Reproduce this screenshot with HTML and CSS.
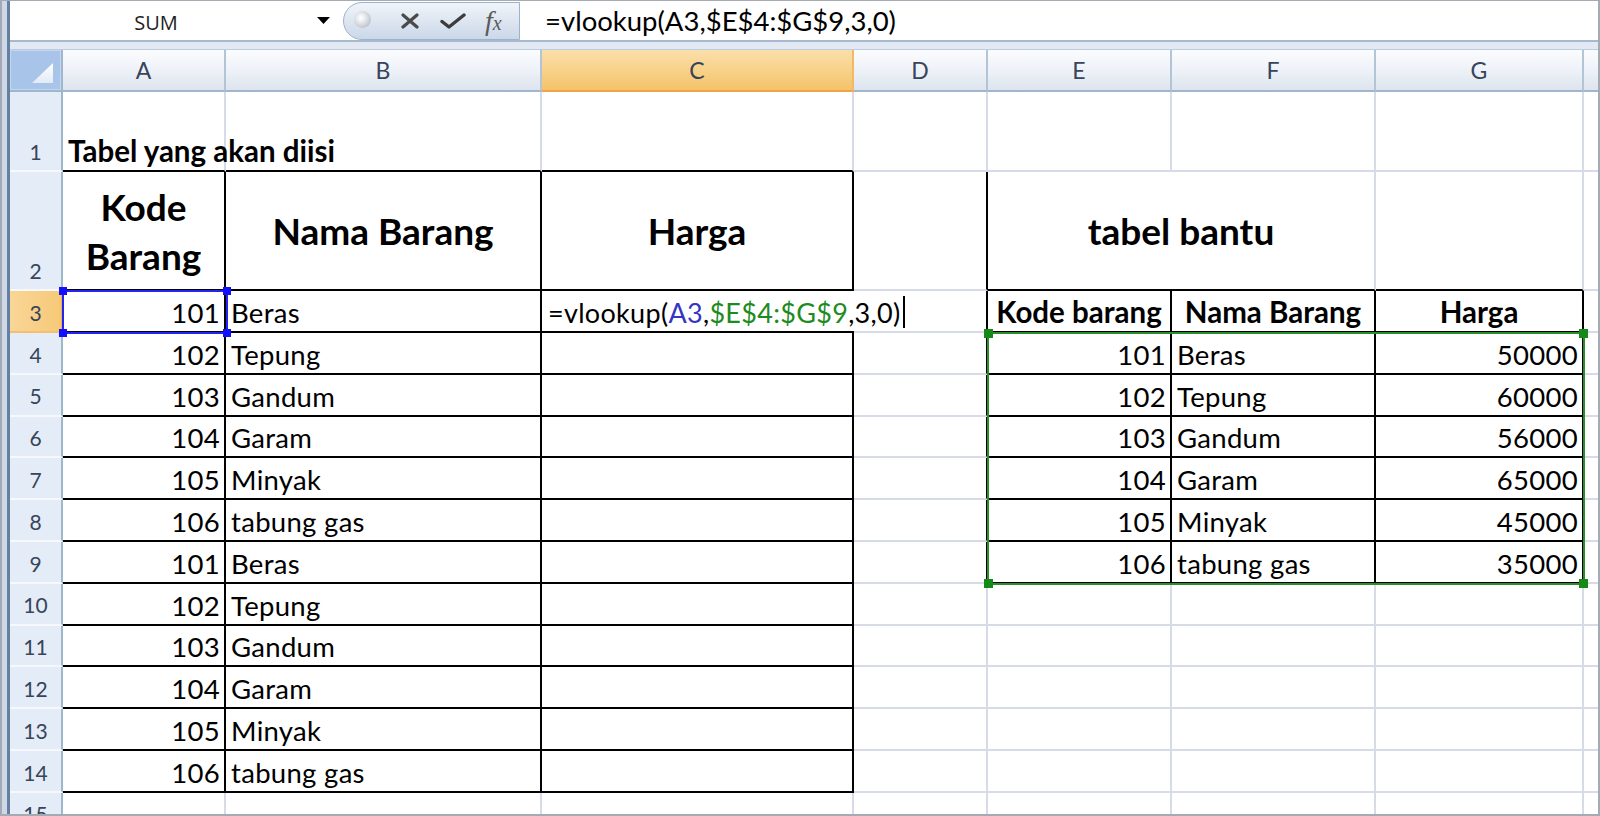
FILE: index.html
```html
<!DOCTYPE html>
<html>
<head>
<meta charset="utf-8">
<title>vlookup</title>
<link rel="stylesheet" href="styles.css">
</head>
<body>
<div class="window">
  <div class="leftbar"></div>
  <div class="main">
    <div class="fbar">
      <div class="namebox">
        <span class="name">SUM</span>
        <svg class="arrow" viewBox="0 0 13 7"><path d="M0 0H13L6.5 7Z" fill="#000"/></svg>
      </div>
      <div class="pill">
        <span class="knob"></span>
        <svg class="ix" viewBox="0 0 20 16"><path d="M3 2L17 14M17 2L3 14" stroke="#4a4a4a" stroke-width="3.2" stroke-linecap="round" fill="none"/></svg>
        <svg class="iok" viewBox="0 0 26 16"><path d="M2 8.5L9 14L24 2" stroke="#3c3c3c" stroke-width="3.4" stroke-linecap="round" stroke-linejoin="round" fill="none"/></svg>
        <span class="fx"><i>f</i><i class="sub">x</i></span>
      </div>
      <div class="input">=vlookup(A3,$E$4:$G$9,3,0)</div>
    </div>
    <div class="sep"></div>
    <div class="sheet">
      <div class="grid">
        <div class="corner"><svg class="tri" viewBox="0 0 51 40"><defs><linearGradient id="tg" x1="0" y1="0" x2="0" y2="1"><stop offset="0" stop-color="#ffffff"/><stop offset="1" stop-color="#e3eaf5"/></linearGradient></defs><polygon points="22,33 43,33 43,13" fill="url(#tg)"/></svg></div>
        <div class="ch">A</div><div class="ch">B</div><div class="ch sel">C</div><div class="ch">D</div><div class="ch">E</div><div class="ch">F</div><div class="ch">G</div><div class="ch hl"></div>

        <div class="rh">1</div><div class="c b kb">Tabel yang akan diisi</div><div class="c kb"></div><div class="c kb"></div><div class="c"></div><div class="c"></div><div class="c"></div><div class="c"></div><div class="c hl"></div>

        <div class="rh">2</div><div class="c big kr kb"><span>Kode<br>Barang</span></div><div class="c big kr kb">Nama Barang</div><div class="c big kr kb">Harga</div><div class="c kr"></div><div class="c big kb span2">tabel bantu</div><div class="c kb"></div><div class="c hl"></div>

        <div class="rh sel">3</div><div class="c n kr kb">101</div><div class="c kr kb">Beras</div><div class="c kr kb c3"><div class="editor"><span class="etext">=vlookup(<span class="ra">A3</span>,<span class="rg">$E$4:$G$9</span>,3,0)</span><span class="cursor"></span></div></div><div class="c kr"></div><div class="c b ctr kr kb">Kode barang</div><div class="c b ctr kr kb">Nama Barang</div><div class="c b ctr kr kb">Harga</div><div class="c hl"></div>

        <div class="rh">4</div><div class="c n kr kb">102</div><div class="c kr kb">Tepung</div><div class="c kr kb"></div><div class="c kr"></div><div class="c n kr kb">101</div><div class="c kr kb">Beras</div><div class="c n kr kb">50000</div><div class="c hl"></div>

        <div class="rh">5</div><div class="c n kr kb">103</div><div class="c kr kb">Gandum</div><div class="c kr kb"></div><div class="c kr"></div><div class="c n kr kb">102</div><div class="c kr kb">Tepung</div><div class="c n kr kb">60000</div><div class="c hl"></div>

        <div class="rh">6</div><div class="c n kr kb">104</div><div class="c kr kb">Garam</div><div class="c kr kb"></div><div class="c kr"></div><div class="c n kr kb">103</div><div class="c kr kb">Gandum</div><div class="c n kr kb">56000</div><div class="c hl"></div>

        <div class="rh">7</div><div class="c n kr kb">105</div><div class="c kr kb">Minyak</div><div class="c kr kb"></div><div class="c kr"></div><div class="c n kr kb">104</div><div class="c kr kb">Garam</div><div class="c n kr kb">65000</div><div class="c hl"></div>

        <div class="rh">8</div><div class="c n kr kb">106</div><div class="c kr kb">tabung gas</div><div class="c kr kb"></div><div class="c kr"></div><div class="c n kr kb">105</div><div class="c kr kb">Minyak</div><div class="c n kr kb">45000</div><div class="c hl"></div>

        <div class="rh">9</div><div class="c n kr kb">101</div><div class="c kr kb">Beras</div><div class="c kr kb"></div><div class="c kr"></div><div class="c n kr kb">106</div><div class="c kr kb">tabung gas</div><div class="c n kr kb">35000</div><div class="c hl"></div>

        <div class="rh">10</div><div class="c n kr kb">102</div><div class="c kr kb">Tepung</div><div class="c kr kb"></div><div class="c"></div><div class="c"></div><div class="c"></div><div class="c"></div><div class="c hl"></div>

        <div class="rh">11</div><div class="c n kr kb">103</div><div class="c kr kb">Gandum</div><div class="c kr kb"></div><div class="c"></div><div class="c"></div><div class="c"></div><div class="c"></div><div class="c hl"></div>

        <div class="rh">12</div><div class="c n kr kb">104</div><div class="c kr kb">Garam</div><div class="c kr kb"></div><div class="c"></div><div class="c"></div><div class="c"></div><div class="c"></div><div class="c hl"></div>

        <div class="rh">13</div><div class="c n kr kb">105</div><div class="c kr kb">Minyak</div><div class="c kr kb"></div><div class="c"></div><div class="c"></div><div class="c"></div><div class="c"></div><div class="c hl"></div>

        <div class="rh">14</div><div class="c n kr kb">106</div><div class="c kr kb">tabung gas</div><div class="c kr kb"></div><div class="c"></div><div class="c"></div><div class="c"></div><div class="c"></div><div class="c hl"></div>

        <div class="rh">15</div><div class="c"></div><div class="c"></div><div class="c"></div><div class="c"></div><div class="c"></div><div class="c"></div><div class="c"></div><div class="c hl"></div>
      </div>
      <div class="ref ref-a"><span class="hd tl"></span><span class="hd tr"></span><span class="hd bl"></span><span class="hd br"></span></div>
      <div class="ref ref-g"><span class="hd tl"></span><span class="hd tr"></span><span class="hd bl"></span><span class="hd br"></span></div>
    </div>
  </div>
</div>
</body>
</html>
```
FILE: styles.css
```css
* { box-sizing: border-box; margin: 0; padding: 0; }
html, body { width: 1600px; height: 816px; overflow: hidden; background: #fff; }
body { font-family: Lato, "Open Sans", "Liberation Sans", sans-serif; color: #000; }

.window {
  display: flex;
  width: 1600px;
  height: 816px;
  border-top: 1px solid #a5abb3;
  border-right: 2px solid #a5abb3;
  border-bottom: 2px solid #a5abb3;
  overflow: hidden;
}
.leftbar {
  flex: none;
  width: 10px;
  background: linear-gradient(to right, #a1aab6 0, #a1aab6 2px, #cfd8e4 2px, #cfd8e4 7px, #62809f 7px, #62809f 10px);
}
.main { flex: 1; min-width: 0; display: flex; flex-direction: column; }

/* formula bar */
.fbar { flex: none; height: 39px; display: flex; background: #fff; }
.namebox { flex: none; width: 333px; display: flex; align-items: center; }
.name { width: 292px; text-align: center; font-family: "Open Sans", sans-serif; font-size: 20px; color: #1e1e1e; margin-top: 3px; }
.arrow { margin-left: 15px; width: 13px; height: 7px; }
.pill {
  flex: none;
  width: 177px;
  height: 38px;
  margin-top: 1px;
  display: flex;
  align-items: center;
  border: 1px solid #9db2cb;
  border-radius: 19px 0 0 19px;
  background: linear-gradient(#f1f5fa, #dfe7f1 45%, #cbd8e9);
}
.knob {
  flex: none;
  margin-left: 10px;
  margin-top: -3px;
  width: 17px;
  height: 17px;
  border-radius: 50%;
  background: radial-gradient(circle at 40% 40%, #ffffff 0, #eceef1 25%, #c2c7ce 70%, #a9b0b9 100%);
}
.ix { flex: none; margin-left: 29px; width: 20px; height: 16px; }
.iok { flex: none; margin-left: 20px; width: 26px; height: 16px; }
.fx { margin-left: 19px; font-family: "Liberation Serif", serif; font-size: 28px; color: #5a5a5a; line-height: 1; }
.fx .sub { font-size: 20px; }
.input { flex: 1; display: flex; align-items: center; padding-left: 25px; font-size: 27.5px; white-space: nowrap; }

.sep { flex: none; height: 10px; border-top: 2px solid #a7b9d0; background: #e2e9f3; border-bottom: 1px solid #bccbdd; }

/* sheet */
.sheet { flex: 1; min-height: 0; position: relative; overflow: hidden; }
.grid {
  display: grid;
  grid-template-columns: 53px 163px 316px 312px 134px 184px 204px 208px 1fr;
  grid-template-rows: 42px 80px 119px 42px repeat(12, 41.8px);
}
.corner { background: #a9c4e9; border-right: 2px solid #9eb6ce; border-bottom: 2px solid #9eb6ce; box-shadow: inset 0 0 0 1px #c6d6ee; }
.tri { display: block; width: 51px; height: 40px; }
.ch {
  display: flex;
  align-items: center;
  justify-content: center;
  font-size: 23px;
  color: #37445a;
  background: linear-gradient(#fbfcfe, #eef2f8 50%, #dde4ee);
  border-right: 2px solid #b4c4d7;
  border-bottom: 2px solid #9fb6ce;
}
.ch.sel { background: linear-gradient(#fadfaa, #f8d28a 50%, #f4c26a); border-bottom-color: #f0a447; border-right-color: #f2b866; }
.rh {
  display: flex;
  align-items: flex-end;
  justify-content: center;
  padding-bottom: 6px;
  font-size: 21px;
  line-height: 1.2;
  color: #37445a;
  background: #e4ecf7;
  border-right: 2px solid #9eb6ce;
  border-bottom: 2px solid #f6f8fc;
}
.rh.sel { background: linear-gradient(to right, #f9d698, #f6c977); border-bottom-color: #f4c06d; border-right-color: #eeae55; }

.c {
  display: flex;
  align-items: flex-end;
  padding: 0 5px 2px;
  border-right: 2px solid #d7dbe7;
  border-bottom: 2px solid #d7dbe7;
  white-space: nowrap;
  font-size: 27.5px;
  letter-spacing: 0.3px;
  line-height: 1.2;
}
.hl { border-right: none; }
.n { justify-content: flex-end; padding-right: 4px; }
.kr { border-right-color: #000; }
.kb { border-bottom-color: #000; }
.b { font-weight: 700; font-size: 29.5px; letter-spacing: 0; }
.ctr { justify-content: center; }
.big { font-weight: 700; font-size: 37px; letter-spacing: 0; align-items: center; justify-content: center; text-align: center; line-height: 49px; padding: 0; }
.span2 { grid-column: span 2; }

/* in-cell editor */
.c3 { position: relative; }
.editor {
  position: absolute;
  left: 0;
  top: 0;
  width: 368px;
  height: 40px;
  z-index: 2;
  background: #fff;
  display: flex;
  align-items: flex-end;
  padding: 0 0 2px 6px;
  font-size: 27px;
  line-height: 1.2;
  white-space: nowrap;
}
.etext { flex: none; }
.ra { color: #3535c8; }
.rg { color: #1f8b1f; }
.cursor { flex: none; display: block; width: 2px; height: 32px; background: #000; margin-left: 3px; margin-bottom: 1px; }

/* reference highlights */
.ref { position: absolute; z-index: 3; }
.ref-a { left: 52px; top: 240px; width: 166px; height: 44px; border: 2px solid #2424f0; }
.ref-g { left: 977px; top: 282px; width: 598px; height: 253px; border: 2px solid #2a8f2a; }
.hd { position: absolute; width: 8px; height: 8px; }
.ref-a .hd { background: #1010ff; }
.ref-g .hd { background: #168a16; width: 9px; height: 9px; }
.tl { left: -5px; top: -5px; }
.tr { right: -5px; top: -5px; }
.bl { left: -5px; bottom: -5px; }
.br { right: -5px; bottom: -5px; }
```
